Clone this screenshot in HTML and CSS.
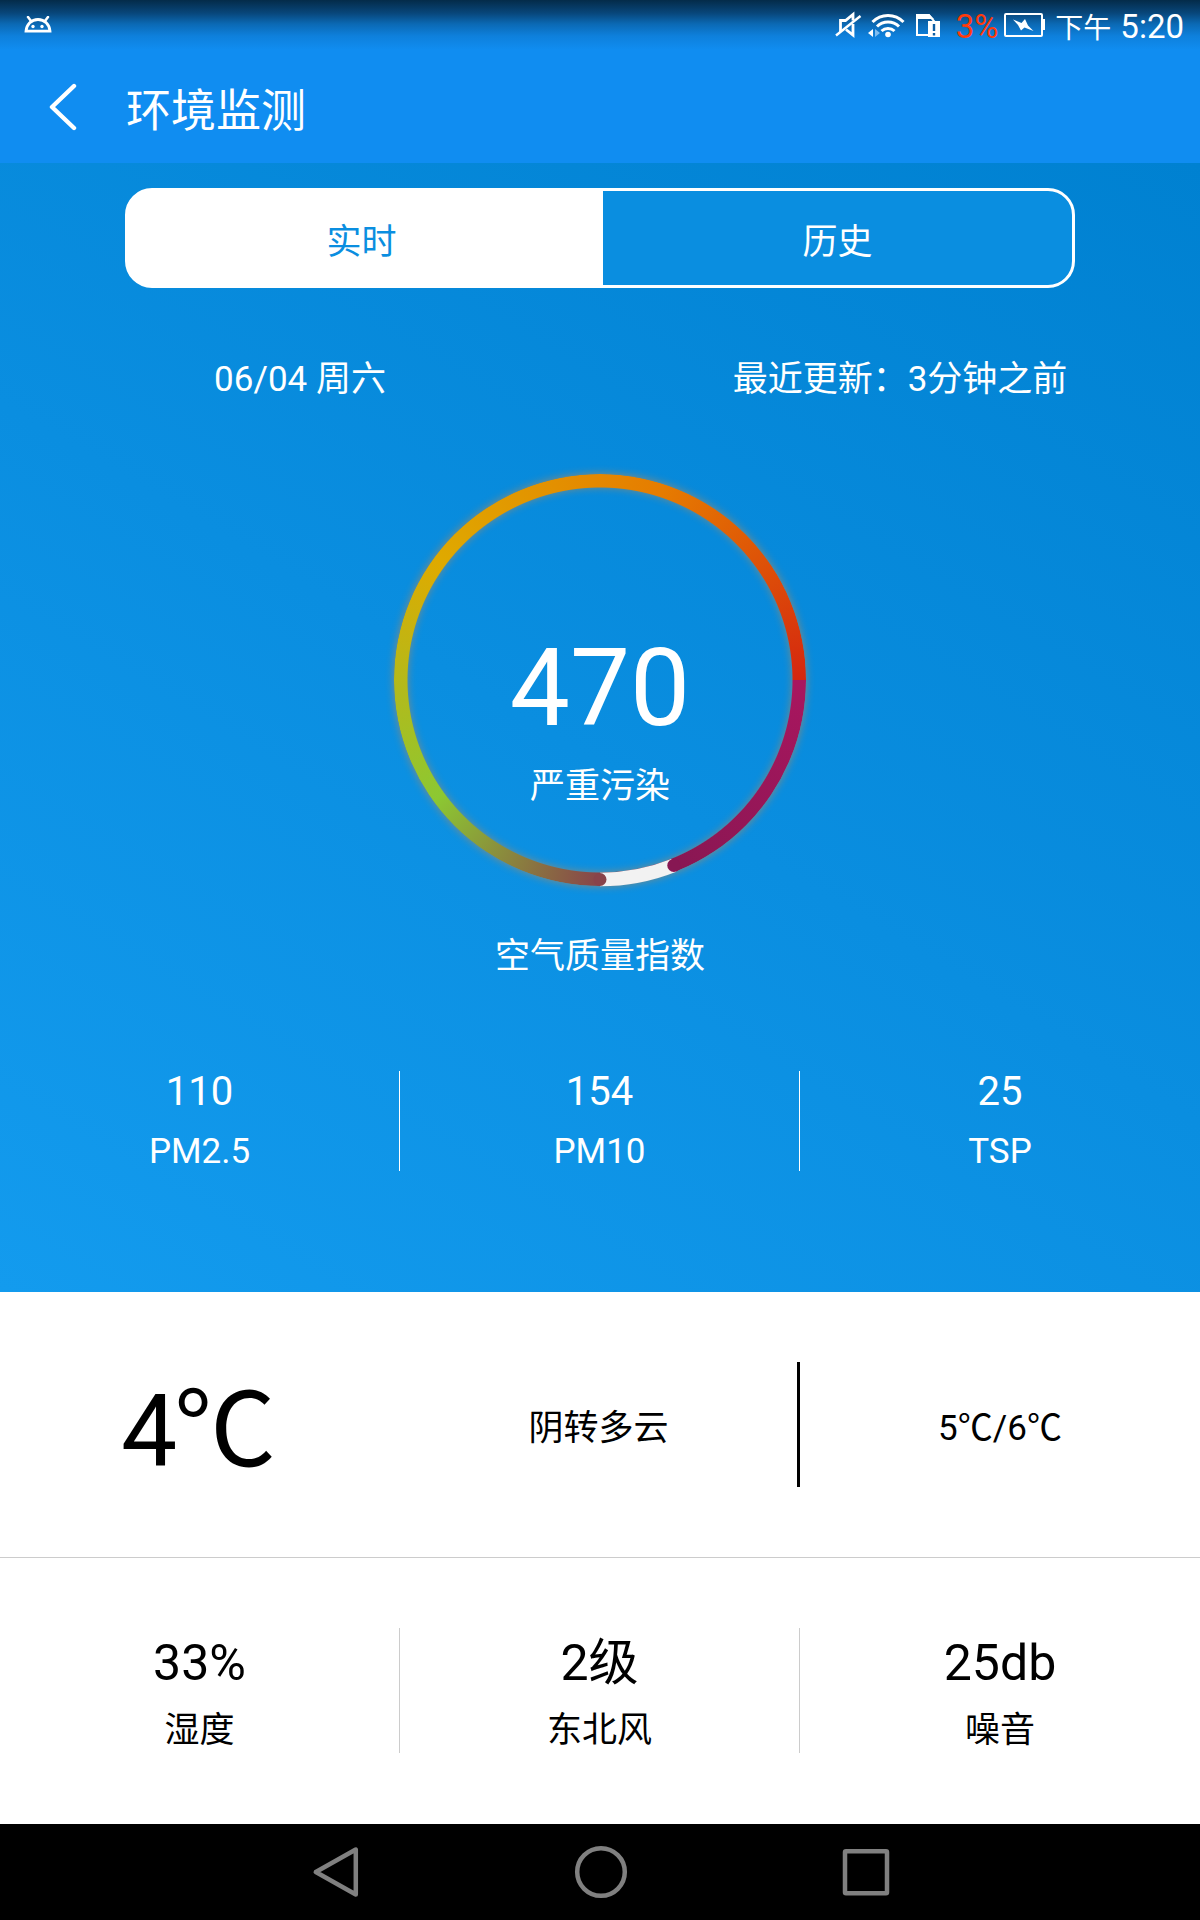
FILE: index.html
```html
<!DOCTYPE html>
<html lang="zh-CN">
<head>
  <meta charset="UTF-8" />
  <title>环境监测</title>
  <link rel="stylesheet" href="styles.css">
</head>
<body>

  <header>
    <div class="status-bar">
      <svg class="android" width="28" height="18" viewBox="0 0 28 18">
        <path d="M2 15.2C2.5 8.500 7.500 3.500 14 3.500S25.500 8.500 26 15.200Z" fill="none" stroke="#fff" stroke-width="2.800" />
        <path d="M4 1l3 4M24 1l-3 4" stroke="#fff" stroke-width="2.500" stroke-linecap="round" />
        <circle cx="9" cy="10.500" r="1.700" fill="#fff" />
        <circle cx="18" cy="10.500" r="1.700" fill="#fff" />
      </svg>
      <div class="status-icons">
        <svg width="110" height="28" viewBox="835 11 110 28">
          <!-- muted speaker -->
          <path d="M840.500 32V20.500h5l7.500-6v6M846 29.500l7 5.500V24" fill="none" stroke="#fff" stroke-width="2.800" />
          <path d="M836 35.500L860.500 16" stroke="#fff" stroke-width="2.400" />
          <!-- wifi -->
          <g fill="none" stroke="#fff" stroke-width="3">
            <path d="M872.500 22a21.500 21.500 0 0 1 31 0" />
            <path d="M877 26.500a15.500 15.500 0 0 1 22 0" />
            <path d="M881.500 31a9.500 9.500 0 0 1 13 0" />
          </g>
          <circle cx="888" cy="34.500" r="2.800" fill="#fff" />
          <path d="M873 29v8l-5-4z" fill="#fff" />
          <path d="M875 29v8l5-4z" fill="#7fbdf0" />
          <!-- sim card -->
          <path d="M917 15v20h14M917 15h12l5 6v7" fill="none" stroke="#fff" stroke-width="2" />
          <path d="M916 14h13l5 5H916z" fill="#fff" />
          <path d="M928 21h12v16h-12z" fill="#fff" />
          <path d="M934 24v7M934 33v2.500" stroke="#0c5ea4" stroke-width="2.400" />
        </svg>
        <span class="battery-level">3%</span>
        <svg class="battery" width="41" height="24" viewBox="0 0 41 24">
          <rect x="1" y="1" width="37" height="22" rx="1" fill="none" stroke="#fff" stroke-width="2" />
          <path d="M38 6h3v11h-3z" fill="#fff" />
          <path d="M9 6.500l8.500 3.500 3.500-4 3 6.500 5.500 5.500-9-3.500-3.500 3-3-5.500z" fill="#fff" />
        </svg>
        <span class="period">下午</span>
        <span class="clock">5:20</span>
      </div>
    </div>
    <div class="title-bar">
      <svg width="28" height="48" viewBox="0 0 28 48">
        <path d="M25 3L3 24l22 21" fill="none" stroke="#fff" stroke-width="4.400" stroke-linecap="round" stroke-linejoin="round" />
      </svg>
      <h1>环境监测</h1>
    </div>
  </header>

  <section class="air">
    <div class="tabs">
      <div class="tab active">实时</div>
      <div class="tab">历史</div>
    </div>

    <div class="info">
      <span>06/04 周六</span>
      <span>最近更新：3分钟之前</span>
    </div>

    <div class="gauge">
      <svg class="gauge-layer" viewBox="0 0 440 440">
        <circle class="glow" cx="220" cy="220" r="199.500" />
      </svg>
      <div class="gauge-ring"></div>
      <svg class="gauge-layer" viewBox="0 0 440 440">
        <path d="M293.800 405.400A199.500 199.500 0 0 1 220 419.500" fill="none" stroke="#f2f2f2" stroke-width="13.600" />
        <circle cx="220" cy="419.500" r="6.500" fill="#88434a" />
        <circle cx="293.800" cy="405.400" r="6.500" fill="#871753" />
      </svg>
      <div class="gauge-text">
        <div class="aqi">470</div>
        <div class="level">严重污染</div>
      </div>
    </div>
    <div class="gauge-title">空气质量指数</div>

    <div class="row pollutants">
      <div class="col">
        <div class="value">110</div>
        <div class="label">PM2.5</div>
      </div>
      <div class="col">
        <div class="value">154</div>
        <div class="label">PM10</div>
      </div>
      <div class="col">
        <div class="value">25</div>
        <div class="label">TSP</div>
      </div>
    </div>
  </section>

  <section class="row weather">
    <div class="col temp">4<span class="unit">℃</span></div>
    <div class="col sky">阴转多云</div>
    <div class="col">5℃/6℃</div>
  </section>

  <section class="row details">
    <div class="col">
      <div class="value">33%</div>
      <div class="label">湿度</div>
    </div>
    <div class="col">
      <div class="value">2级</div>
      <div class="label">东北风</div>
    </div>
    <div class="col">
      <div class="value">25db</div>
      <div class="label">噪音</div>
    </div>
  </section>

  <nav>
    <svg width="60" height="60" viewBox="0 0 60 60"><path d="M51.800 7.500v45L11.800 30z" /></svg>
    <svg width="60" height="60" viewBox="0 0 60 60"><circle cx="31" cy="30" r="23.800" /></svg>
    <svg width="60" height="60" viewBox="0 0 60 60"><rect x="9" y="9.200" width="42" height="42" rx="1" /></svg>
  </nav>

</body>
</html>
```
FILE: styles.css
```css
* {
  box-sizing: border-box;
}

body {
  margin: 0;
  width: 1200px;
  height: 1920px;
  display: flex;
  flex-direction: column;
  overflow: hidden;
  background: #fff;
  color: #000;
  font-family: Roboto, "Noto Sans CJK SC", sans-serif;
  font-size: 35px;
  line-height: 42px;
}

svg {
  display: block;
  flex: none;
}

header {
  height: 163px;
  background: linear-gradient(to bottom, #042b49 0, #08467a 13px, #0b69b4 24px, #0e80dc 36px, #108df1 50px);
  color: #fff;
}

.status-bar {
  height: 50px;
  padding: 0 16px 0 24px;
  display: flex;
  justify-content: space-between;
}

.android {
  margin-top: 16px;
}

.status-icons {
  display: flex;
  font-size: 33px;
  line-height: 54px;
}

.status-icons svg {
  margin-top: 11px;
}

.battery-level {
  margin-left: 11px;
  color: #ff3a0a;
}

.status-icons .battery {
  margin: 13px 10px 0 6px;
}

.period {
  margin-right: 9px;
  font-size: 28px;
  line-height: 57px;
}

.title-bar {
  padding: 33px 0 0 49px;
  display: flex;
}

h1 {
  margin: 3px 0 0 49px;
  font-size: 45px;
  font-weight: 400;
  line-height: 52px;
}

.air {
  height: 1129px;
  padding-top: 25px;
  background: linear-gradient(211deg, #0081d1, #0a8ee0 52%, #139bee);
  color: #fff;
}

.tabs {
  width: 950px;
  height: 100px;
  margin: 0 auto;
  display: flex;
  border: 3px solid #fff;
  border-radius: 27px;
  background: linear-gradient(to right, #fff 50%, #0a8ee0 50%) border-box;
  overflow: hidden;
}

.tab {
  flex: 1;
  text-align: center;
  line-height: 103px;
}

.tab.active {
  flex: none;
  width: 475px;
  padding-right: 8px;
  background: #fff;
  color: #0a8ee0;
}

.info {
  margin-top: 71px;
  display: flex;
}

.info span {
  flex: 1;
  text-align: center;
}

.gauge {
  width: 440px;
  height: 440px;
  margin: 59px auto 0;
  display: grid;
}

/* the masked ring makes its own stacking context, so every layer gets one */
.gauge > * {
  grid-area: 1 / 1;
  isolation: isolate;
}

.gauge-layer {
  width: 440px;
  height: 440px;
}

.glow {
  fill: none;
  stroke: #b08a5c;
  stroke-width: 13;
  opacity: 0.75;
  filter: blur(4px);
}

.gauge-ring {
  margin: 14px;
  border-radius: 50%;
  background: conic-gradient(from 90deg, #a9165f, #871752, #8cc832, #dfaa00, #e67c00, #d5270f);
  mask: radial-gradient(closest-side, transparent 192px, #000 193px);
}

.gauge-text {
  padding-top: 154px;
  text-align: center;
}

.aqi {
  font-size: 107px;
  line-height: 150px;
}

.level {
  margin-top: 2px;
}

.gauge-title {
  margin-top: 36px;
  text-align: center;
}

.row {
  display: grid;
  grid-template-columns: repeat(3, 400px);
}

.col {
  text-align: center;
  border-right: 1px solid #ccc;
}

.col:last-child {
  border-right: 0;
}

.pollutants {
  height: 100px;
  margin-top: 93px;
}

.pollutants .col {
  height: 100px;
  border-color: #fff;
}

.pollutants .value {
  font-size: 40px;
  line-height: 41px;
}

.pollutants .label {
  margin-top: 19px;
}

.weather {
  height: 266px;
  padding: 70px 0;
  border-bottom: 1px solid #ccc;
  line-height: 133px;
}

.weather .col {
  height: 125px;
  border: 0;
}

.weather .temp {
  font-size: 100px;
  line-height: 138px;
}

.unit {
  margin-right: 3px;
  margin-left: -3px;
  font-size: 102px;
}

.weather .sky {
  border-right: 3px solid #000;
}

.details {
  height: 266px;
  padding: 70px 0;
}

.details .col {
  height: 125px;
}

.details .value {
  font-size: 50px;
  line-height: 70px;
}

.details .label {
  margin-top: 12px;
}

nav {
  height: 96px;
  padding: 18px 304px 0;
  display: flex;
  justify-content: space-between;
  background: #000;
}

nav svg {
  fill: none;
  stroke: #808080;
  stroke-width: 4.500;
  stroke-linejoin: round;
}
```
